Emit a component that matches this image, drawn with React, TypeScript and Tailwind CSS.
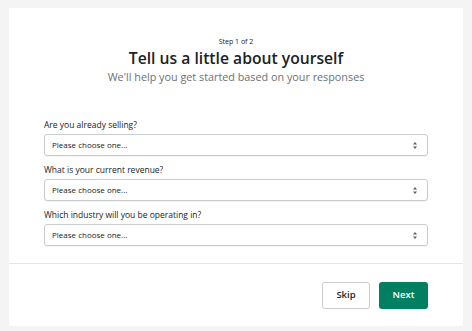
const questions = [
  'Are you already selling?',
  'What is your current revenue?',
  'Which industry will you be operating in?',
]

function SelectArrows() {
  return (
    <svg width="4" height="7" viewBox="0 0 4 7" className="text-[#5c5f62]">
      <path d="M2 0L4 2.6H0Z" fill="currentColor" />
      <path d="M2 7L0 4.4H4Z" fill="currentColor" />
    </svg>
  )
}

export default function App() {
  return (
    <div
      className="w-[472px] h-[331px] bg-[#f4f4f4] pt-2 px-[9px] pb-[5px]"
      style={{ fontFamily: '"Open Sans", "Noto Sans", sans-serif' }}
    >
      <div className="h-full bg-white flex flex-col">
        <div className="flex-1 border-b border-[#e4e5e7] px-[35px]">
          <div className="pt-[29px] flex flex-col items-center">
            <div className="text-[7px] leading-[10px] text-[#202223]">Step 1 of 2</div>
            <h1 className="text-[15.7px] leading-[22px] font-semibold text-[#202223]">
              Tell us a little about yourself
            </h1>
            <p className="text-[10.8px] leading-[15px] text-[#6d7175]">
              We'll help you get started based on your responses
            </p>
          </div>
          <div className="mt-[35px] flex flex-col gap-[8px]">
            {questions.map((q) => (
              <div key={q}>
                <div className="text-[8.5px] leading-[12px] text-[#202223] mb-[3px]">{q}</div>
                <div className="h-[22px] rounded-[3px] border border-[#c9cccf] shadow-[0_1px_0_rgba(0,0,0,0.05)] flex items-center justify-between pl-[7px] pr-[10px]">
                  <span className="text-[8px] text-[#202223]">Please choose one...</span>
                  <SelectArrows />
                </div>
              </div>
            ))}
          </div>
        </div>
        <div className="h-[62px] flex items-start justify-end gap-[9px] pt-[18px] pr-[35px]">
          <button className="w-[48px] h-[27px] rounded-[3px] border border-[#c9cccf] bg-white text-[9.5px] font-semibold text-[#202223]">
            Skip
          </button>
          <button className="w-[49px] h-[27px] rounded-[3px] bg-[#008060] text-[9.5px] font-semibold text-white">
            Next
          </button>
        </div>
      </div>
    </div>
  )
}
